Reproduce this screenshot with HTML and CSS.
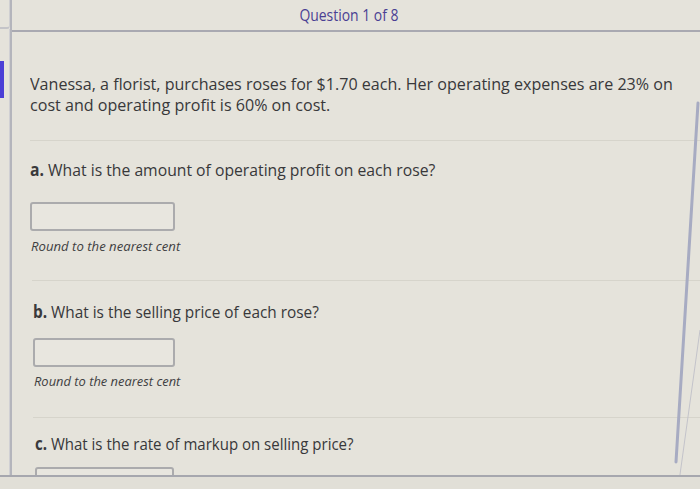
FILE: index.html
```html
<!DOCTYPE html>
<html>
<head>
<meta charset="utf-8">
<link rel="stylesheet" href="styles.css">
</head>
<body>
<div class="screen">
  <div class="app">
    <aside class="rail">
      <div class="rail-top"></div>
      <div class="rail-item"><span class="rail-marker"></span></div>
    </aside>
    <main class="main">
      <header class="header"><span class="header-title">Question 1 of 8</span></header>
      <div class="content">
        <p class="stem">Vanessa, a florist, purchases roses for $1.70 each. Her operating expenses are 23% on<br>cost and operating profit is 60% on cost.</p>
        <hr class="sep sep-1">
        <section class="part part-a">
          <p class="prompt"><b>a.</b> What is the amount of operating profit on each rose?</p>
          <div class="answer"></div>
          <p class="hint">Round to the nearest cent</p>
        </section>
        <hr class="sep sep-2">
        <section class="part part-b">
          <p class="prompt"><b>b.</b> What is the selling price of each rose?</p>
          <div class="answer"></div>
          <p class="hint">Round to the nearest cent</p>
        </section>
        <hr class="sep sep-3">
        <section class="part part-c">
          <p class="prompt"><b>c.</b> What is the rate of markup on selling price?</p>
          <div class="answer"></div>
        </section>
      </div>
    </main>
    <svg class="scrollbar" width="40" height="489" viewBox="660 0 40 489">
      <line x1="698" y1="103" x2="676" y2="462" stroke="#a7abc2" stroke-width="3" stroke-linecap="round"/>
      <line x1="700" y1="330" x2="678" y2="489" stroke="#c3c3ca" stroke-width="1"/>
    </svg>
  </div>
  <div class="bottom-edge"></div>
</div>
</body>
</html>
```
FILE: styles.css
```css
* { box-sizing: border-box; }
html, body {
  margin: 0;
  padding: 0;
  background: #e5e3db;
}
body {
  font-family: "Open Sans", "Noto Sans", sans-serif;
  color: #38383a;
  width: 700px;
  height: 489px;
  overflow: hidden;
}
.screen {
  display: flex;
  flex-direction: column;
  height: 489px;
}
.app {
  position: relative;
  display: flex;
  height: 475px;
  overflow: hidden;
}
.rail {
  width: 12px;
  flex: none;
  border-right: 2px solid #b4b5bc;
  display: flex;
  flex-direction: column;
}
.rail-top {
  height: 29px;
  border-bottom: 2px solid #c4c4c8;
  border-right: 1px solid #cfcfd2;
  border-bottom-right-radius: 3px;
}
.rail-item {
  flex: 1;
  padding-top: 32px;
  border-right: 1px solid #d0d0d4;
}
.rail-marker {
  display: block;
  width: 4px;
  height: 37px;
  background: #4b3fd6;
}
.main {
  flex: 1;
  display: flex;
  flex-direction: column;
}
.header {
  height: 32px;
  border-bottom: 2px solid #a9a9b1;
  color: #4a3f93;
  font-size: 16px;
  line-height: 31px;
  text-align: center;
  padding-right: 50px;
}
.header-title {
  display: inline-block;
  transform: scaleX(0.87);
}
.content {
  padding: 0 26px 0 18px;
}
.stem, .prompt, .hint {
  transform-origin: left center;
  white-space: nowrap;
}
.stem {
  margin: 41px 0 0;
  font-size: 17px;
  line-height: 21px;
  transform: scaleX(0.946);
}
.sep {
  border: 0;
  height: 1px;
  background: #d6d4cb;
  margin: 0;
}
.sep-1 { margin: 25px 0 0 0; }
.sep-2 { margin: 25px 0 0 2px; }
.sep-3 { margin: 27px 0 0 3px; }
.prompt {
  margin: 18px 0 0;
  font-size: 17px;
  line-height: 21px;
  transform: scaleX(0.925);
}
.prompt b {
  font-weight: 700;
  color: #3a3a3c;
}
.answer {
  width: 145px;
  height: 29px;
  margin-top: 22px;
  border: 2px solid #ababad;
  border-radius: 3px;
  background: #e8e6df;
}
.hint {
  margin: 6px 0 0 1px;
  font-size: 13.5px;
  line-height: 18px;
  font-style: italic;
  color: #3f3f42;
  transform: scaleX(0.974);
}
.part-b { padding-left: 3px; }
.part-b .prompt { margin-top: 20px; transform: scaleX(0.904); }
.part-b .answer { margin-top: 16px; width: 142px; }
.part-b .hint { margin-top: 5px; transform: scaleX(0.955); }
.part-c { padding-left: 5px; }
.part-c .prompt { margin-top: 15px; transform: scaleX(0.883); }
.part-c .answer { margin-top: 13px; width: 139px; }
.scrollbar {
  position: absolute;
  right: 0;
  top: 0;
}
.bottom-edge {
  flex: 1;
  border-top: 2px solid #a6a7ae;
  background: #e1dfd7;
}
```
